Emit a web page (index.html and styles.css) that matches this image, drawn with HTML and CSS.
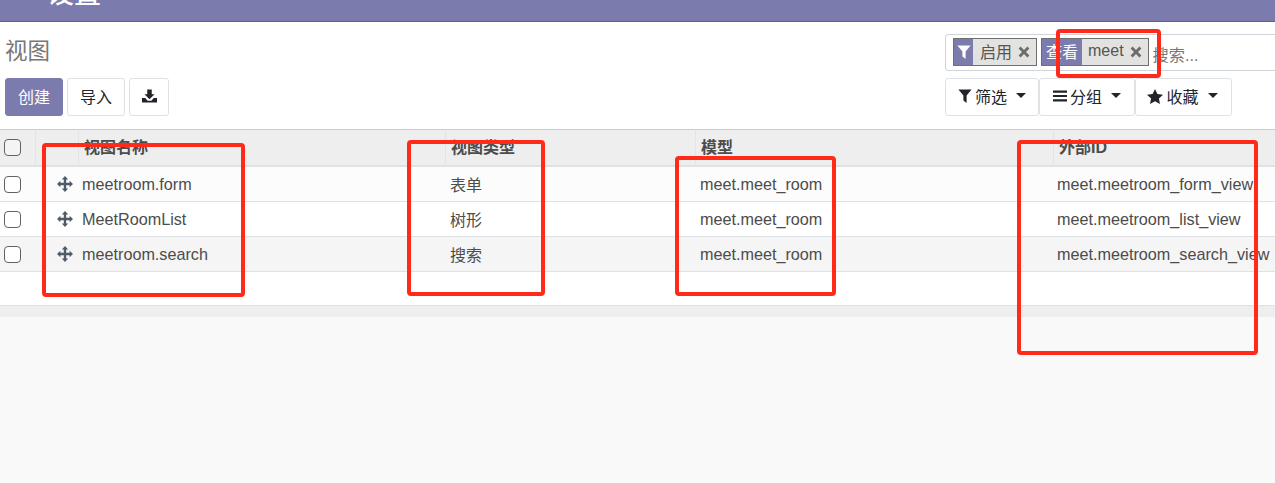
FILE: index.html
```html
<!DOCTYPE html>
<html lang="zh">
<head>
<meta charset="utf-8">
<title>视图</title>
<link rel="stylesheet" href="styles.css">
</head>
<body>
<svg class="defs" width="0" height="0" aria-hidden="true">
  <symbol id="i-filter" viewBox="0 0 14 14"><path d="M0.4 0.6h13.2L8.6 6.6V14L5.4 11.6V6.6z"/></symbol>
  <symbol id="i-x" viewBox="0 0 12 12"><path d="M2.6 0.6L6 4 9.4 0.6 11.4 2.6 8 6l3.4 3.4-2 2L6 8 2.6 11.4 0.6 9.4 4 6 0.6 2.6z"/></symbol>
  <symbol id="i-bars" viewBox="0 0 14 12"><path d="M0 0.5h14v2.2H0zM0 4.9h14v2.2H0zM0 9.3h14v2.2H0z"/></symbol>
  <symbol id="i-star" viewBox="0 0 16 15"><path d="M8 0l2.4 5 5.6.7-4.1 3.8 1.1 5.5L8 12.3 3 15l1.1-5.5L0 5.7 5.6 5z"/></symbol>
  <symbol id="i-download" viewBox="0 0 16 14"><path d="M5.6 0h4.8v5h3L8 10.4 2.6 5h3zM0 9h3.4L6 12h4l2.6-3H16v5H0z"/></symbol>
  <symbol id="i-move" viewBox="0 0 16 16"><path d="M8 0l3.2 3.4H9.2v3.4h3.4V4.8L16 8l-3.4 3.2V9.2H9.2v3.4h2L8 16l-3.2-3.4h2V9.2H3.4v2L0 8l3.4-3.2v2h3.4V3.4h-2z"/></symbol>
</svg>

<header class="navbar"><span class="brand">设置</span></header>

<section class="panel">
  <div class="panel-left">
    <h1 class="title">视图</h1>
    <div class="actions">
      <button class="btn btn-primary">创建</button>
      <button class="btn btn-plain">导入</button>
      <button class="btn btn-icon"><svg class="ico-download"><use href="#i-download"/></svg></button>
    </div>
  </div>
  <div class="panel-right">
    <div class="searchbox">
      <div class="facet">
        <span class="facet-label"><svg class="ico-filter-w"><use href="#i-filter"/></svg></span>
        <span class="facet-value">启用</span>
        <svg class="ico-x"><use href="#i-x"/></svg>
      </div>
      <div class="facet">
        <span class="facet-label facet-label-text">查看</span>
        <span class="facet-value facet-value-latin">meet</span>
        <svg class="ico-x"><use href="#i-x"/></svg>
      </div>
      <span class="placeholder">搜索...</span>
    </div>
    <div class="menus">
      <button class="btn menu menu-filter"><svg class="ico-filter"><use href="#i-filter"/></svg>筛选<i class="caret"></i></button>
      <button class="btn menu menu-group"><svg class="ico-bars"><use href="#i-bars"/></svg>分组<i class="caret"></i></button>
      <button class="btn menu menu-fav"><svg class="ico-star"><use href="#i-star"/></svg>收藏<i class="caret"></i></button>
    </div>
  </div>
</section>

<table class="list">
  <colgroup>
    <col class="c-check"><col class="c-handle"><col class="c-name"><col class="c-type"><col class="c-model"><col class="c-id">
  </colgroup>
  <thead>
    <tr>
      <th class="cell-check"><span class="checkbox"></span></th>
      <th></th>
      <th>视图名称</th>
      <th>视图类型</th>
      <th>模型</th>
      <th>外部ID</th>
    </tr>
  </thead>
  <tbody>
    <tr class="odd">
      <td class="cell-check"><span class="checkbox"></span></td>
      <td class="cell-handle"><svg class="ico-move"><use href="#i-move"/></svg></td>
      <td>meetroom.form</td><td class="cell-type">表单</td><td class="cell-model">meet.meet_room</td><td>meet.meetroom_form_view</td>
    </tr>
    <tr>
      <td class="cell-check"><span class="checkbox"></span></td>
      <td class="cell-handle"><svg class="ico-move"><use href="#i-move"/></svg></td>
      <td>MeetRoomList</td><td class="cell-type">树形</td><td class="cell-model">meet.meet_room</td><td>meet.meetroom_list_view</td>
    </tr>
    <tr class="odd">
      <td class="cell-check"><span class="checkbox"></span></td>
      <td class="cell-handle"><svg class="ico-move"><use href="#i-move"/></svg></td>
      <td>meetroom.search</td><td class="cell-type">搜索</td><td class="cell-model">meet.meet_room</td><td>meet.meetroom_search_view</td>
    </tr>
    <tr class="empty"><td colspan="6"></td></tr>
  </tbody>
</table>
<div class="footband"></div>

<div class="mark mark-facet"></div>
<div class="mark mark-name"></div>
<div class="mark mark-type"></div>
<div class="mark mark-model"></div>
<div class="mark mark-id"></div>
</body>
</html>
```
FILE: styles.css
```css
* { box-sizing: border-box; }
html, body { height: 100%; }
body {
  margin: 0;
  overflow: hidden;
  position: relative;
  background: #f9f9f9;
  color: #4c4c4c;
  font-family: "Liberation Sans", "Noto Sans CJK SC", sans-serif;
  font-size: 16.2px;
}
.defs { position: absolute; }
svg { fill: currentColor; display: block; flex: none; }

.navbar {
  height: 22px;
  background: #7c7bad;
  border-bottom: 1px solid #5f5e8b;
  overflow: hidden;
  display: flex;
  align-items: flex-end;
  padding-left: 47px;
}
.brand {
  color: #fff;
  font-size: 27px;
  font-weight: 500;
  line-height: 27px;
  margin-bottom: 13px;
  flex: none;
}

.panel {
  height: 107px;
  background: #fff;
  display: flex;
  justify-content: space-between;
  padding: 12px 0 0 5px;
}
.title {
  margin: 0;
  height: 44px;
  font-size: 22.5px;
  font-weight: 400;
  line-height: 36px;
  color: #777;
}
.actions { display: flex; gap: 4px; }
.btn {
  height: 38px;
  border: 1px solid #dee2e6;
  border-radius: 3px;
  background: #fff;
  color: #212529;
  font-family: inherit;
  font-size: 16px;
  padding: 0 0 2px;
  display: flex;
  align-items: center;
  justify-content: center;
}
.btn-primary { width: 58px; background: #7c7bad; border-color: #7c7bad; color: #fff; }
.btn-plain { width: 58px; }
.btn-icon { width: 40px; }
.ico-download { width: 15px; height: 14px; }

.panel-right { width: 330px; flex: none; }
.searchbox {
  height: 37px;
  width: 345px;
  border: 1px solid #ced4da;
  border-radius: 3px;
  display: flex;
  align-items: center;
  gap: 4px;
  padding: 0 0 2px 7px;
}
.facet {
  height: 28px;
  border: 1px solid #6f6f6f;
  background: #e2e2e0;
  display: flex;
  align-items: center;
}
.facet-label {
  align-self: stretch;
  background: #7c7bad;
  color: #fff;
  width: 19px;
  flex: none;
  display: flex;
  align-items: center;
  justify-content: center;
}
.facet-label-text { width: 40px; font-size: 16px; padding-bottom: 1px; }
.ico-filter-w { width: 14px; height: 14px; }
.facet-value { padding: 0 6px 2px 7px; color: #555; font-size: 16px; }
.facet-value-latin { padding-left: 6px; }
.facet-value + .ico-x { margin-right: 6px; }
.ico-x { width: 12px; height: 12px; color: #6c6c6c; }
.placeholder { color: #777; padding-top: 4px; }

.menus { display: flex; margin-top: 7px; }
.menu { gap: 3px; }
.menu-filter { width: 94px; }
.menu-group { width: 96px; }
.menu-fav { width: 97px; padding-right: 2px; }
.ico-filter { width: 14px; height: 14px; }
.ico-bars { width: 14px; height: 12px; }
.ico-star { width: 16px; height: 15px; }
.caret {
  width: 0;
  height: 0;
  margin-left: 6px;
  border-top: 5px solid #212529;
  border-left: 5px solid transparent;
  border-right: 5px solid transparent;
  margin-top: -2px;
}

.list {
  width: 1275px;
  table-layout: fixed;
  border-collapse: separate;
  border-spacing: 0;
  background: #fff;
}
.c-check { width: 35px; }
.c-handle { width: 43px; }
.c-name { width: 367px; }
.c-type { width: 250px; }
.c-model { width: 358px; }
.c-id { width: 222px; }
th {
  height: 38px;
  padding: 0 0 3px 5px;
  background: #eee;
  border-top: 1px solid #ccc;
  border-bottom: 2px solid #dee2e6;
  border-left: 1px solid #e4e4e6;
  text-align: left;
  font-weight: 700;
  font-size: 16px;
  color: #4c4c4c;
  white-space: nowrap;
}
th:first-child { border-left: 0; }
td {
  height: 35px;
  padding: 1px 0 0 4px;
  border-bottom: 1px solid #dee2e6;
  white-space: nowrap;
  color: #4c4c4c;
}
tr.odd td { background: #f5f5f6; }
tbody tr:first-child td { background: #fcfcfc; }
.list .cell-check { padding: 0 0 0 4px; }
.list .cell-handle { padding: 0 0 0 22px; }
.list .cell-type { padding: 0 0 1px 5px; font-size: 16px; }
.list .cell-model { padding-left: 5px; }
th.cell-check { padding-bottom: 0; }
.checkbox {
  display: block;
  width: 17px;
  height: 17px;
  border: 1.5px solid #5f6368;
  border-radius: 4px;
  background: #fff;
}
th .checkbox { background: #f4f4f4; }
.ico-move { width: 16px; height: 16px; color: #4f5b66; }
.empty td { height: 34px; background: #fff; }
.footband { height: 11px; background: #eee; }

.mark {
  position: absolute;
  border: 4px solid #ff2a1a;
  border-radius: 4px;
}
.mark-facet { left: 1056px; top: 29px; width: 105px; height: 49px; }
.mark-name { left: 42px; top: 143px; width: 203px; height: 154px; }
.mark-type { left: 407px; top: 140px; width: 138px; height: 156px; }
.mark-model { left: 675px; top: 156px; width: 161px; height: 140px; }
.mark-id { left: 1017px; top: 140px; width: 241px; height: 215px; }
```
